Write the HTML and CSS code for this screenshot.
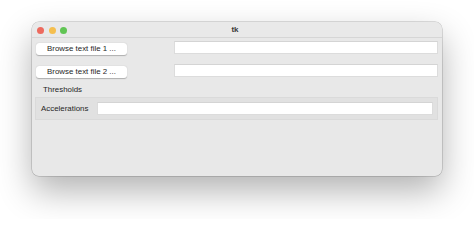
FILE: index.html
```html
<!DOCTYPE html>
<html>
<head>
<meta charset="utf-8">
<link rel="stylesheet" href="styles.css">
</head>
<body>
<div class="window">
  <div class="titlebar">
    <div class="lights">
      <span class="light red"></span>
      <span class="light yellow"></span>
      <span class="light green"></span>
    </div>
    <div class="title">tk</div>
  </div>
  <div class="content">
    <div class="row row-file">
      <button class="btn">Browse text file 1 ...</button>
      <div class="entry"></div>
    </div>
    <div class="row row-file">
      <button class="btn">Browse text file 2 ...</button>
      <div class="entry"></div>
    </div>
    <div class="label thresholds">Thresholds</div>
    <div class="frame">
      <div class="label accel">Accelerations</div>
      <div class="entry"></div>
    </div>
  </div>
</div>
</body>
</html>
```

FILE: styles.css
```css
html, body {
  margin: 0;
  padding: 0;
  background: #ffffff;
  width: 474px;
  height: 219px;
  overflow: hidden;
  font-family: "Liberation Sans", Arial, sans-serif;
}

body {
  padding-top: 22px;
  padding-left: 32px;
  box-sizing: border-box;
}

.window {
  width: 410px;
  height: 154px;
  background: #e8e8e8;
  border-radius: 7px;
  box-shadow: 0 15px 34px rgba(0, 0, 0, 0.3), 0 0 0 0.5px rgba(0, 0, 0, 0.25);
  overflow: hidden;
  display: flex;
  flex-direction: column;
}

.titlebar {
  height: 15px;
  border-bottom: 1px solid #d6d6d6;
  background: #e9e9e9;
  display: flex;
  align-items: center;
  position: relative;
}

.lights {
  display: flex;
  gap: 4.5px;
  padding-left: 5px;
  padding-top: 1px;
}

.light {
  width: 7px;
  height: 7px;
  border-radius: 50%;
  display: block;
}

.red { background: #ed6a5e; }
.yellow { background: #f5bf4f; }
.green { background: #61c554; }

.title {
  position: absolute;
  left: 0;
  right: 0;
  top: 3px;
  text-align: center;
  font-size: 8px;
  font-weight: bold;
  color: #3a3a3a;
  padding-right: 4px;
}

.content {
  display: flex;
  flex-direction: column;
  padding: 3px 4px 0 3px;
}

.row-file {
  display: flex;
  align-items: flex-start;
  height: 14px;
}

.row-file + .row-file {
  margin-top: 9px;
}

.btn {
  width: 91px;
  height: 12px;
  margin-top: 2px;
  margin-left: 1px;
  padding: 0;
  border: none;
  border-radius: 3px;
  background: #ffffff;
  box-shadow: 0 0.5px 1px rgba(0, 0, 0, 0.25);
  font-family: "Liberation Sans", Arial, sans-serif;
  font-size: 7.9px;
  color: #262626;
  line-height: 12px;
  text-align: center;
}

.row-file .entry {
  margin-left: 47px;
  flex: 1;
  height: 13px;
}

.entry {
  background: #ffffff;
  border: 1px solid #dcdcdc;
  border-top-color: #d4d4d4;
  box-sizing: border-box;
}

.label {
  font-size: 7.9px;
  color: #262626;
}

.thresholds {
  margin-top: 5px;
  height: 14px;
  line-height: 14px;
  padding-left: 8px;
}

.frame {
  height: 23px;
  background: #e1e1e1;
  border: 1px solid #dadada;
  box-sizing: border-box;
  display: flex;
  align-items: center;
  padding: 0 4px 0 5px;
}

.accel {
  width: 56px;
}

.frame .entry {
  flex: 1;
  height: 13px;
}
```
